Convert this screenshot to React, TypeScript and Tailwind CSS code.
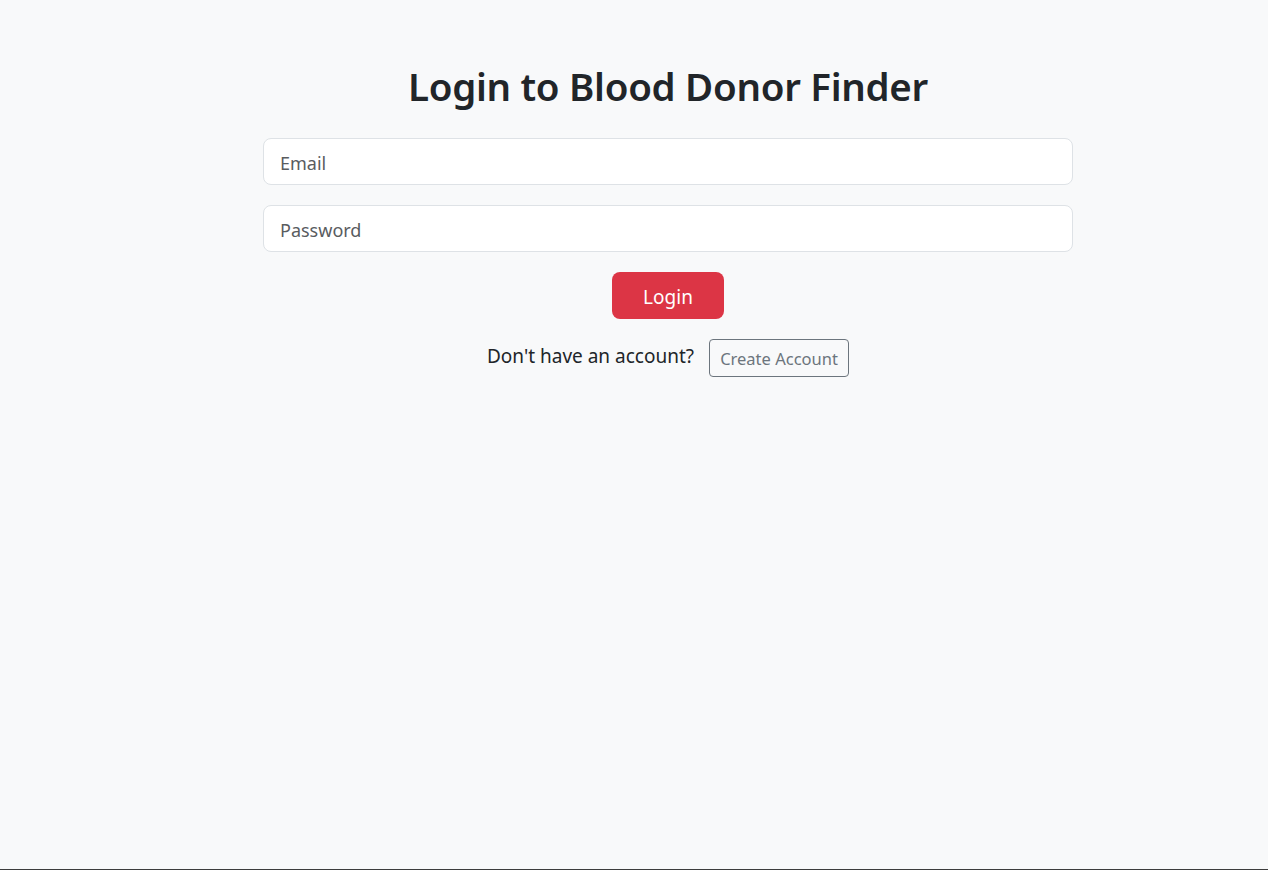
import React, { useState } from 'react';

const App: React.FC = () => {
  const [email, setEmail] = useState('');
  const [password, setPassword] = useState('');

  return (
    <div
      className="min-h-[870px] h-[870px] bg-[#f8f9fa] border-b border-[#3c3c3c] text-[#212529] pl-[68px] flex justify-center"
      style={{ fontFamily: '"Noto Sans", "Open Sans", sans-serif' }}
    >
      <div className="w-[810px] pt-[62px]">
        <h1 className="text-center text-[38.5px] leading-[48px] font-semibold mb-[28px] tracking-[-0.3px]">
          Login to Blood Donor Finder
        </h1>

        <form className="flex flex-col" onSubmit={(e) => e.preventDefault()}>
          <input
            type="email"
            value={email}
            onChange={(e) => setEmail(e.target.value)}
            placeholder="Email"
            className="h-[47px] w-full bg-white border border-[#dee2e6] rounded-lg px-4 pt-[3px] text-[18px] placeholder:text-[#595c5f] outline-none mb-5"
          />
          <input
            type="password"
            value={password}
            onChange={(e) => setPassword(e.target.value)}
            placeholder="Password"
            className="h-[47px] w-full bg-white border border-[#dee2e6] rounded-lg px-4 pt-[3px] text-[18px] placeholder:text-[#595c5f] outline-none mb-5"
          />
          <div className="flex justify-center mb-5">
            <button
              type="submit"
              className="w-[112px] h-[47px] bg-[#dc3545] text-white text-[19px] pt-[3px] rounded-lg"
            >
              Login
            </button>
          </div>
        </form>

        <div className="flex items-center justify-center gap-[15px]">
          <span className="text-[19px] pb-1">Don't have an account?</span>
          <button className="h-[38px] w-[140px] border border-[#6c757d] text-[#6c757d] text-[16.5px] pt-[2px] rounded">
            Create Account
          </button>
        </div>
      </div>
    </div>
  );
};

export default App;
